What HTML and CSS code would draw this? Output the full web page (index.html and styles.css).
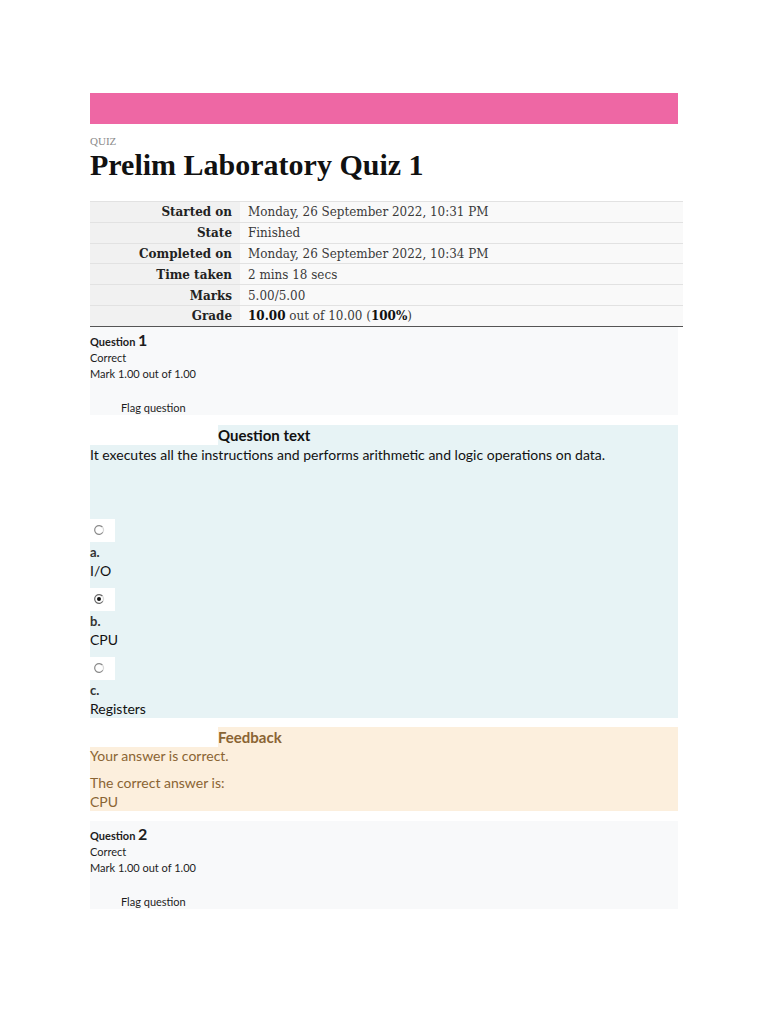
FILE: index.html
```html
<!DOCTYPE html>
<html>
<head>
<meta charset="utf-8">
<link rel="stylesheet" href="styles.css">
</head>
<body>
<div class="page">
  <div class="banner"></div>
  <div class="kicker">QUIZ</div>
  <h1 class="title">Prelim Laboratory Quiz 1</h1>

  <table class="summary">
    <tr><th>Started on</th><td>Monday, 26 September 2022, 10:31 PM</td></tr>
    <tr><th>State</th><td>Finished</td></tr>
    <tr><th>Completed on</th><td>Monday, 26 September 2022, 10:34 PM</td></tr>
    <tr><th>Time taken</th><td>2 mins 18 secs</td></tr>
    <tr><th>Marks</th><td>5.00/5.00</td></tr>
    <tr class="last"><th>Grade</th><td><b>10.00</b> out of 10.00 (<b>100%</b>)</td></tr>
  </table>

  <div class="qinfo first">
    <div class="qno">Question <span class="num">1</span></div>
    <div class="qstate">Correct</div>
    <div class="qmark">Mark 1.00 out of 1.00</div>
    <div class="flag">Flag question</div>
  </div>

  <div class="formulation">
    <div class="sechead"><span class="pad"></span><span class="label">Question text</span></div>
    <div class="qtext">It executes all the instructions and performs arithmetic and logic operations on data.</div>
    <div class="answers">
      <div class="opt">
        <span class="radio"><svg width="12" height="12" viewBox="0 0 12 12"><path d="M9.5 3.2 A4.4 4.4 0 1 0 9.8 8.3" fill="none" stroke="#8a8a8a" stroke-width="1.2"/><path d="M9.8 8.3 A4.4 4.4 0 0 0 9.5 3.2" fill="none" stroke="#d8d8d8" stroke-width="1.2"/></svg></span>
        <div class="letter">a.</div>
        <div class="atext">I/O</div>
      </div>
      <div class="opt">
        <span class="radio"><svg width="12" height="12" viewBox="0 0 12 12"><path d="M9.5 3.2 A4.4 4.4 0 1 0 9.8 8.3" fill="none" stroke="#6a6a6a" stroke-width="1.2"/><path d="M9.8 8.3 A4.4 4.4 0 0 0 9.5 3.2" fill="none" stroke="#d8d8d8" stroke-width="1.2"/><circle cx="6" cy="6" r="2" fill="#111"/></svg></span>
        <div class="letter">b.</div>
        <div class="atext">CPU</div>
      </div>
      <div class="opt">
        <span class="radio"><svg width="12" height="12" viewBox="0 0 12 12"><path d="M9.5 3.2 A4.4 4.4 0 1 0 9.8 8.3" fill="none" stroke="#8a8a8a" stroke-width="1.2"/><path d="M9.8 8.3 A4.4 4.4 0 0 0 9.5 3.2" fill="none" stroke="#d8d8d8" stroke-width="1.2"/></svg></span>
        <div class="letter">c.</div>
        <div class="atext">Registers</div>
      </div>
    </div>
  </div>

  <div class="feedback">
    <div class="sechead"><span class="pad"></span><span class="label">Feedback</span></div>
    <div class="fb1">Your answer is correct.</div>
    <div class="fb2">The correct answer is:</div>
    <div class="fb3">CPU</div>
  </div>

  <div class="qinfo">
    <div class="qno">Question <span class="num">2</span></div>
    <div class="qstate">Correct</div>
    <div class="qmark">Mark 1.00 out of 1.00</div>
    <div class="flag">Flag question</div>
  </div>
</div>
</body>
</html>
```

FILE: styles.css
```css
html, body {
  margin: 0;
  padding: 0;
  background: #ffffff;
}

.page {
  width: 588px;
  margin-left: 90px;
  padding-top: 93px;
  font-family: "Lato", "Open Sans", sans-serif;
  color: #1d1d1d;
}

.banner {
  height: 31px;
  background: #ee67a4;
}

.kicker {
  margin-top: 11px;
  font-family: "Liberation Serif", serif;
  font-size: 11px;
  color: #8a8a8a;
  line-height: 13px;
}

.title {
  margin: 0;
  font-family: "Liberation Serif", serif;
  font-weight: bold;
  font-size: 30px;
  line-height: 34px;
  color: #111;
}

.summary {
  margin-top: 19px;
  width: 593px;
  border-collapse: collapse;
  font-family: "DejaVu Serif", serif;
  font-stretch: condensed;
  font-size: 13.3px;
}

.summary th,
.summary td {
  border-top: 1px solid #e2e2e2;
  padding: 0 8px;
  height: 19.8px;
  line-height: 19px;
  vertical-align: middle;
}

.summary th {
  width: 134px;
  text-align: right;
  font-weight: bold;
  background: #f1f1f1;
  color: #222;
}

.summary td {
  background: #f9f9f9;
  font-weight: 300;
  color: #3a3a3a;
}

.summary td b {
  font-weight: bold;
  color: #111;
}

.summary tr.last th,
.summary tr.last td {
  border-bottom: 1px solid #555;
}

.qinfo {
  background: #f8f9fa;
  height: 88px;
  padding-top: 5px;
  box-sizing: border-box;
  font-size: 11px;
  line-height: 16px;
}

.qno {
  font-weight: bold;
  font-size: 11px;
  line-height: 16px;
}

.qno .num {
  font-size: 16px;
  font-weight: bold;
}

.qstate {
  line-height: 16px;
}

.flag {
  margin-top: 18px;
  margin-left: 31px;
}

.formulation {
  margin-top: 10px;
  margin-bottom: 9px;
  background: #e7f3f5;
  height: 293px;
  color: #111;
}

.sechead {
  display: flex;
  height: 20px;
}

.sechead .pad {
  width: 128px;
  background: #ffffff;
}

.sechead .label {
  flex: 1;
  font-weight: bold;
  font-size: 15px;
  line-height: 20px;
}

.qtext {
  font-size: 14px;
  line-height: 20px;
}

.answers {
  margin-top: 54px;
}

.opt {
  height: 69px;
}

.radio {
  display: flex;
  align-items: center;
  padding-left: 3px;
  width: 22px;
  height: 23px;
  background: #ffffff;
}

.letter {
  margin-top: 1px;
  font-size: 13px;
  line-height: 18px;
  font-weight: bold;
  color: #333;
}

.atext {
  font-size: 14px;
  line-height: 20px;
}

.feedback {
  background: #fcefdd;
  height: 84px;
  margin-bottom: 10px;
  color: #8a6433;
}

.feedback .label {
  color: #8a6433;
}

.fb1 {
  font-size: 14px;
  line-height: 18px;
}

.fb2 {
  margin-top: 9px;
  font-size: 14px;
  line-height: 18px;
}

.fb3 {
  font-size: 14px;
  line-height: 20px;
}
```
